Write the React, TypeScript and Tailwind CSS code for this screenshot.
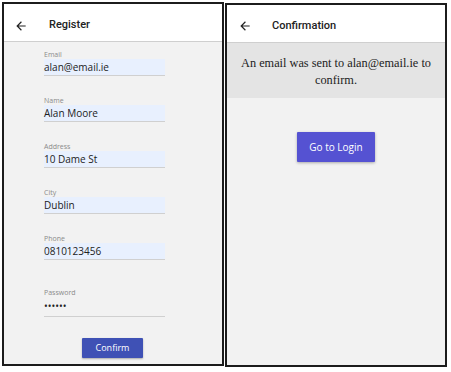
import React from "react";

const Arrow = () => (
  <svg width="14" height="14" viewBox="0 0 24 24" className="shrink-0">
    <path d="M20 11H7.83l5.59-5.59L12 4l-8 8 8 8 1.41-1.41L7.83 13H20v-2z" fill="#222" />
  </svg>
);

const Field = ({ label, value, blue = true, extra = "", h = "h-[17px]" }: { label: string; value: string; blue?: boolean; extra?: string; h?: string }) => (
  <div className={`flex flex-col ${extra}`}>
    <div className="text-[7px] leading-[8px] text-[#8a8a8a]">{label}</div>
    <div
      className={`${h} flex items-center border-b border-[#d0d0d0] text-[10px] text-[#222] ${blue ? "bg-[#e8f0fe]" : ""}`}
    >
      {value}
    </div>
  </div>
);

export default function App() {
  return (
    <div className="w-[451px] h-[372px] bg-white flex items-start" style={{ fontFamily: "'Open Sans', 'Noto Sans', sans-serif" }}>
      <div className="ml-[2px] mt-[2px] w-[222px] h-[364px] border-2 border-[#1c1c1c] bg-[#f2f2f2] flex flex-col">
        <div className="h-[38px] bg-white border-b border-[#cfcfcf] flex items-center pl-[10px] pt-[6px]">
          <Arrow />
          <span className="ml-[21px] text-[11px] font-medium text-[#222]" style={{ fontFamily: "Roboto, sans-serif" }}>Register</span>
        </div>
        <div className="pl-[40px] w-[161px] flex flex-col gap-[21px] pt-[9px]">
          <Field label="Email" value="alan@email.ie" />
          <Field label="Name" value="Alan Moore" />
          <Field label="Address" value="10 Dame St" />
          <Field label="City" value="Dublin" />
          <Field label="Phone" value="0810123456" />
          <Field label="Password" value="••••••" blue={false} extra="mt-[8px]" h="h-[20px]" />
        </div>
        <div className="flex justify-center mt-[21px] pr-[1px]">
          <button className="w-[61px] h-[20px] bg-[#3f51b5] text-white text-[9px] rounded-[1px] shadow-[0_1px_2px_rgba(0,0,0,0.3)]">Confirm</button>
        </div>
      </div>
      <div className="ml-[1px] mt-[3px] w-[222px] h-[364px] border-2 border-[#1c1c1c] bg-[#f2f2f2] flex flex-col">
        <div className="h-[38px] bg-white border-b border-[#cfcfcf] flex items-center pl-[11px] pt-[5px]">
          <Arrow />
          <span className="ml-[20px] text-[11px] font-medium text-[#222]" style={{ fontFamily: "Roboto, sans-serif" }}>Confirmation</span>
        </div>
        <div className="h-[55px] bg-[#e4e4e4] flex items-center justify-center text-center px-[8px] pt-[3px] text-[12.3px] leading-[17px] text-[#222]" style={{ fontFamily: "'Liberation Serif', serif" }}>
          An email was sent to alan@email.ie to confirm.
        </div>
        <div className="flex justify-center mt-[34px]">
          <button className="w-[78px] h-[30px] bg-[#5552d2] text-white text-[10px] rounded-[1px] shadow-[0_1px_3px_rgba(0,0,0,0.3)]">Go to Login</button>
        </div>
      </div>
    </div>
  );
}
